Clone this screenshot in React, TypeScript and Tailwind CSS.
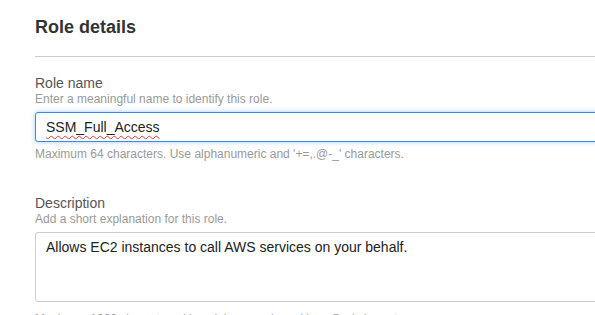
import React from 'react';

const font = { fontFamily: '"Liberation Sans", Arial, sans-serif' };

const App = () => {
  return (
    <div className="h-[315px] w-[595px] overflow-hidden bg-white" style={font}>
      <div className="w-[640px] pl-[35px] pt-[15px]">
        {/* heading */}
        <h2 className="text-[18px] leading-[24px] font-bold text-[#333]">Role details</h2>
        <div className="mt-[17px] h-px bg-[#ccc]" />

        {/* role name */}
        <div className="mt-[17px]">
          <label className="block text-[14px] leading-[18px] text-[#555]">Role name</label>
          <p className="text-[12px] leading-[14px] text-[#9a9a9a]">
            Enter a meaningful name to identify this role.
          </p>
          <div className="mt-[6px] h-[30px] rounded-[3px] border border-[#3a8be2] bg-white px-[10px] shadow-[0_0_5px_rgba(59,139,226,0.45)] flex items-center">
            <span className="text-[14px] text-[#222] underline decoration-wavy decoration-[#e53935] decoration-1 underline-offset-[3px]">
              SSM_Full_Access
            </span>
          </div>
          <p className="mt-[5px] text-[12px] leading-[14px] text-[#9a9a9a]">
            Maximum 64 characters. Use alphanumeric and '+=,.@-_' characters.
          </p>
        </div>

        {/* description */}
        <div className="mt-[33px]">
          <label className="block text-[14px] leading-[18px] text-[#555]">Description</label>
          <p className="text-[12px] leading-[14px] text-[#9a9a9a]">Add a short explanation for this role.</p>
          <div className="mt-[6px] h-[70px] rounded-[3px] border border-[#ccc] bg-white px-[10px] pt-[4px]">
            <p className="text-[14px] leading-[20px] text-[#222]">
              Allows EC2 instances to call AWS services on your behalf.
            </p>
          </div>
          <p className="mt-[10px] text-[12px] leading-[14px] text-[#9a9a9a]">
            Maximum 1000 characters. Use alphanumeric and '+=,.@-_' characters.
          </p>
        </div>
      </div>
    </div>
  );
};

export default App;
